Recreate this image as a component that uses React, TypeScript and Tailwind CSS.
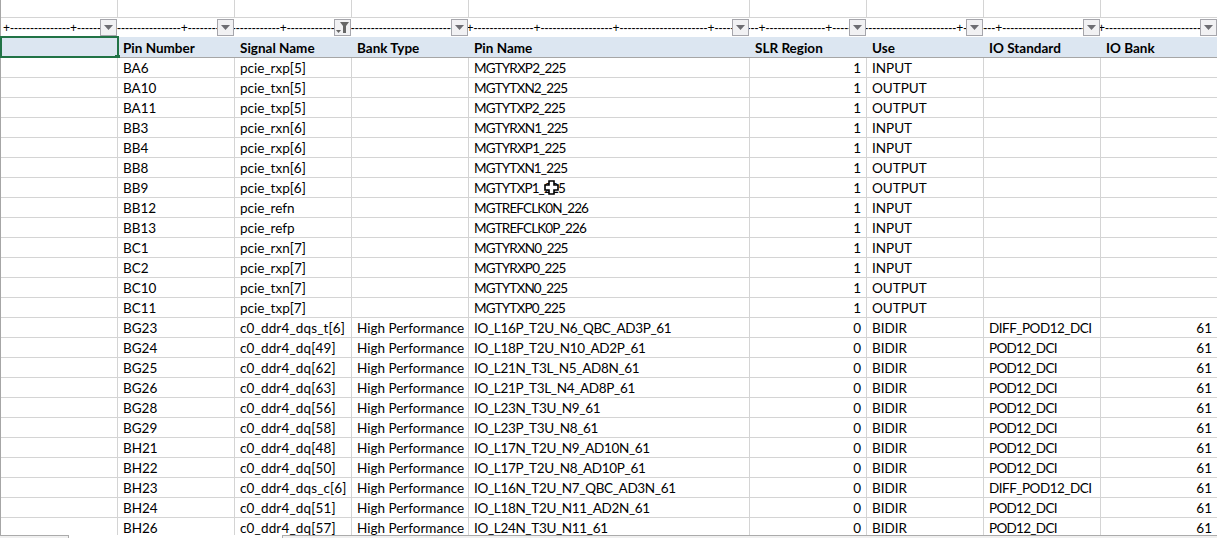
const gridCols = 'grid grid-cols-[117px_117px_117px_117px_281px_117px_117px_117px_117px]'

const headers = ['', 'Pin Number', 'Signal Name', 'Bank Type', 'Pin Name', 'SLR Region', 'Use', 'IO Standard', 'IO Bank']

// dashes between the + marks of the text that runs over the row above the header
const markGaps = [0, 15, 26, 23, 45, 15, 18, 22, 11, 15, 31, 8, 24, 27]
const markText = markGaps.map(n => '-'.repeat(n)).join('+')

const rows = [
  ['BA6', 'pcie_rxp[5]', '', 'MGTYRXP2_225', '1', 'INPUT', '', ''],
  ['BA10', 'pcie_txn[5]', '', 'MGTYTXN2_225', '1', 'OUTPUT', '', ''],
  ['BA11', 'pcie_txp[5]', '', 'MGTYTXP2_225', '1', 'OUTPUT', '', ''],
  ['BB3', 'pcie_rxn[6]', '', 'MGTYRXN1_225', '1', 'INPUT', '', ''],
  ['BB4', 'pcie_rxp[6]', '', 'MGTYRXP1_225', '1', 'INPUT', '', ''],
  ['BB8', 'pcie_txn[6]', '', 'MGTYTXN1_225', '1', 'OUTPUT', '', ''],
  ['BB9', 'pcie_txp[6]', '', 'MGTYTXP1_225', '1', 'OUTPUT', '', ''],
  ['BB12', 'pcie_refn', '', 'MGTREFCLK0N_226', '1', 'INPUT', '', ''],
  ['BB13', 'pcie_refp', '', 'MGTREFCLK0P_226', '1', 'INPUT', '', ''],
  ['BC1', 'pcie_rxn[7]', '', 'MGTYRXN0_225', '1', 'INPUT', '', ''],
  ['BC2', 'pcie_rxp[7]', '', 'MGTYRXP0_225', '1', 'INPUT', '', ''],
  ['BC10', 'pcie_txn[7]', '', 'MGTYTXN0_225', '1', 'OUTPUT', '', ''],
  ['BC11', 'pcie_txp[7]', '', 'MGTYTXP0_225', '1', 'OUTPUT', '', ''],
  ['BG23', 'c0_ddr4_dqs_t[6]', 'High Performance', 'IO_L16P_T2U_N6_QBC_AD3P_61', '0', 'BIDIR', 'DIFF_POD12_DCI', '61'],
  ['BG24', 'c0_ddr4_dq[49]', 'High Performance', 'IO_L18P_T2U_N10_AD2P_61', '0', 'BIDIR', 'POD12_DCI', '61'],
  ['BG25', 'c0_ddr4_dq[62]', 'High Performance', 'IO_L21N_T3L_N5_AD8N_61', '0', 'BIDIR', 'POD12_DCI', '61'],
  ['BG26', 'c0_ddr4_dq[63]', 'High Performance', 'IO_L21P_T3L_N4_AD8P_61', '0', 'BIDIR', 'POD12_DCI', '61'],
  ['BG28', 'c0_ddr4_dq[56]', 'High Performance', 'IO_L23N_T3U_N9_61', '0', 'BIDIR', 'POD12_DCI', '61'],
  ['BG29', 'c0_ddr4_dq[58]', 'High Performance', 'IO_L23P_T3U_N8_61', '0', 'BIDIR', 'POD12_DCI', '61'],
  ['BH21', 'c0_ddr4_dq[48]', 'High Performance', 'IO_L17N_T2U_N9_AD10N_61', '0', 'BIDIR', 'POD12_DCI', '61'],
  ['BH22', 'c0_ddr4_dq[50]', 'High Performance', 'IO_L17P_T2U_N8_AD10P_61', '0', 'BIDIR', 'POD12_DCI', '61'],
  ['BH23', 'c0_ddr4_dqs_c[6]', 'High Performance', 'IO_L16N_T2U_N7_QBC_AD3N_61', '0', 'BIDIR', 'DIFF_POD12_DCI', '61'],
  ['BH24', 'c0_ddr4_dq[51]', 'High Performance', 'IO_L18N_T2U_N11_AD2N_61', '0', 'BIDIR', 'POD12_DCI', '61'],
  ['BH26', 'c0_ddr4_dq[57]', 'High Performance', 'IO_L24N_T3U_N11_61', '0', 'BIDIR', 'POD12_DCI', '61'],
]

// Lato runs a little wider than the sheet's font on capitals and digits
const cellTracking = (column: number, text: string) => {
  if (column === 3) return text.startsWith('MGT') ? 'tracking-[-0.85px]' : 'tracking-[-0.33px]'
  if (column === 6) return text.startsWith('DIFF') ? 'tracking-[-0.5px]' : 'tracking-[-0.7px]'
  if (column === 1 && text.startsWith('c0')) return 'tracking-[0.15px]'
  return ''
}

const FilterButton = ({ active }: { active?: boolean }) => (
  <div className="absolute right-[1px] top-[1px] z-10 flex h-[17px] w-[17px] items-center justify-center border border-[#a6a6ac] bg-[#f1f1f3]">
    {active ? (
      <svg width="15" height="15" viewBox="0 0 15 15">
        <path d="M5 2h9L11 6v7H8V6z" fill="#666" />
        <path d="M1 10h5l-2.500 3z" fill="#666" />
      </svg>
    ) : (
      <svg width="9" height="5" viewBox="0 0 9 5">
        <path d="M0 0h9L4.500 5z" fill="#6d6d72" />
      </svg>
    )}
  </div>
)

const Cell = ({ text, className = '' }: { text: string; className?: string }) => (
  <div
    className={`h-[20px] overflow-hidden whitespace-nowrap border-r border-b border-[#d4d4d4] px-[5px] leading-[20px] ${className}`}
  >
    {text}
  </div>
)

const App = () => {
  return (
    <div className="relative h-[538px] w-[1217px] overflow-hidden bg-white font-['Lato','Liberation_Sans',sans-serif] text-[13.5px] text-black">
      <div className="relative h-[535px] overflow-hidden border-l border-[#a6a6a6]">
        <div className={gridCols}>
          {headers.map((_, i) => (
            <div key={i} className="h-[18px] border-r border-b border-[#d4d4d4]" />
          ))}

          {headers.map((_, i) => (
            <div key={i} className="relative h-[19px]">
              <FilterButton active={i === 2} />
            </div>
          ))}

          {headers.map((h, i) => (
            <div
              key={i}
              className="h-[21px] overflow-hidden whitespace-nowrap border-b border-[#a6a6a6] bg-[#dce6f1] px-[5px] pt-[1px] font-bold leading-[20px]"
            >
              {h}
            </div>
          ))}

          {rows.map((row, r) => (
            <div key={r} className="contents">
              <Cell text="" />
              {row.map((text, i) => (
                <Cell
                  key={i}
                  text={text}
                  className={`${i === 4 || i === 7 ? 'text-right' : ''} ${cellTracking(i, text)}`}
                />
              ))}
            </div>
          ))}
        </div>

        {/* text overflowing across the row, the filter buttons sit on top of it */}
        <div className="absolute left-[2px] top-[19px] h-[19px] whitespace-nowrap font-['Liberation_Sans',sans-serif] text-[12px] leading-[19px]">
          {markText}
        </div>
      </div>

      {/* selected cell */}
      <div className="absolute left-0 top-[36px] h-[22px] w-[119px] border-2 border-[#217346]" />
      <div className="absolute left-[115px] top-[55px] h-[3px] w-[5px] bg-[#217346]" />

      {/* cross cursor */}
      <svg className="absolute left-[544px] top-[180px]" width="15" height="15" viewBox="0 0 15 15">
        <path d="M5 1h5v4h4v5h-4v4H5v-4H1V5h4z" fill="#fff" stroke="#000" strokeWidth="1.600" />
      </svg>

      {/* sheet tabs and scrollbar strip */}
      <div className="absolute bottom-0 left-0 flex h-[3px] w-full">
        <div className="h-full w-[69px] border-t border-r border-[#ababab] bg-[#f0f0f0]" />
        <div className="w-[213px]" />
        <div className="h-full flex-1 border-t border-l border-[#ababab] bg-[#f0f0f0]" />
      </div>
    </div>
  )
}

export default App
